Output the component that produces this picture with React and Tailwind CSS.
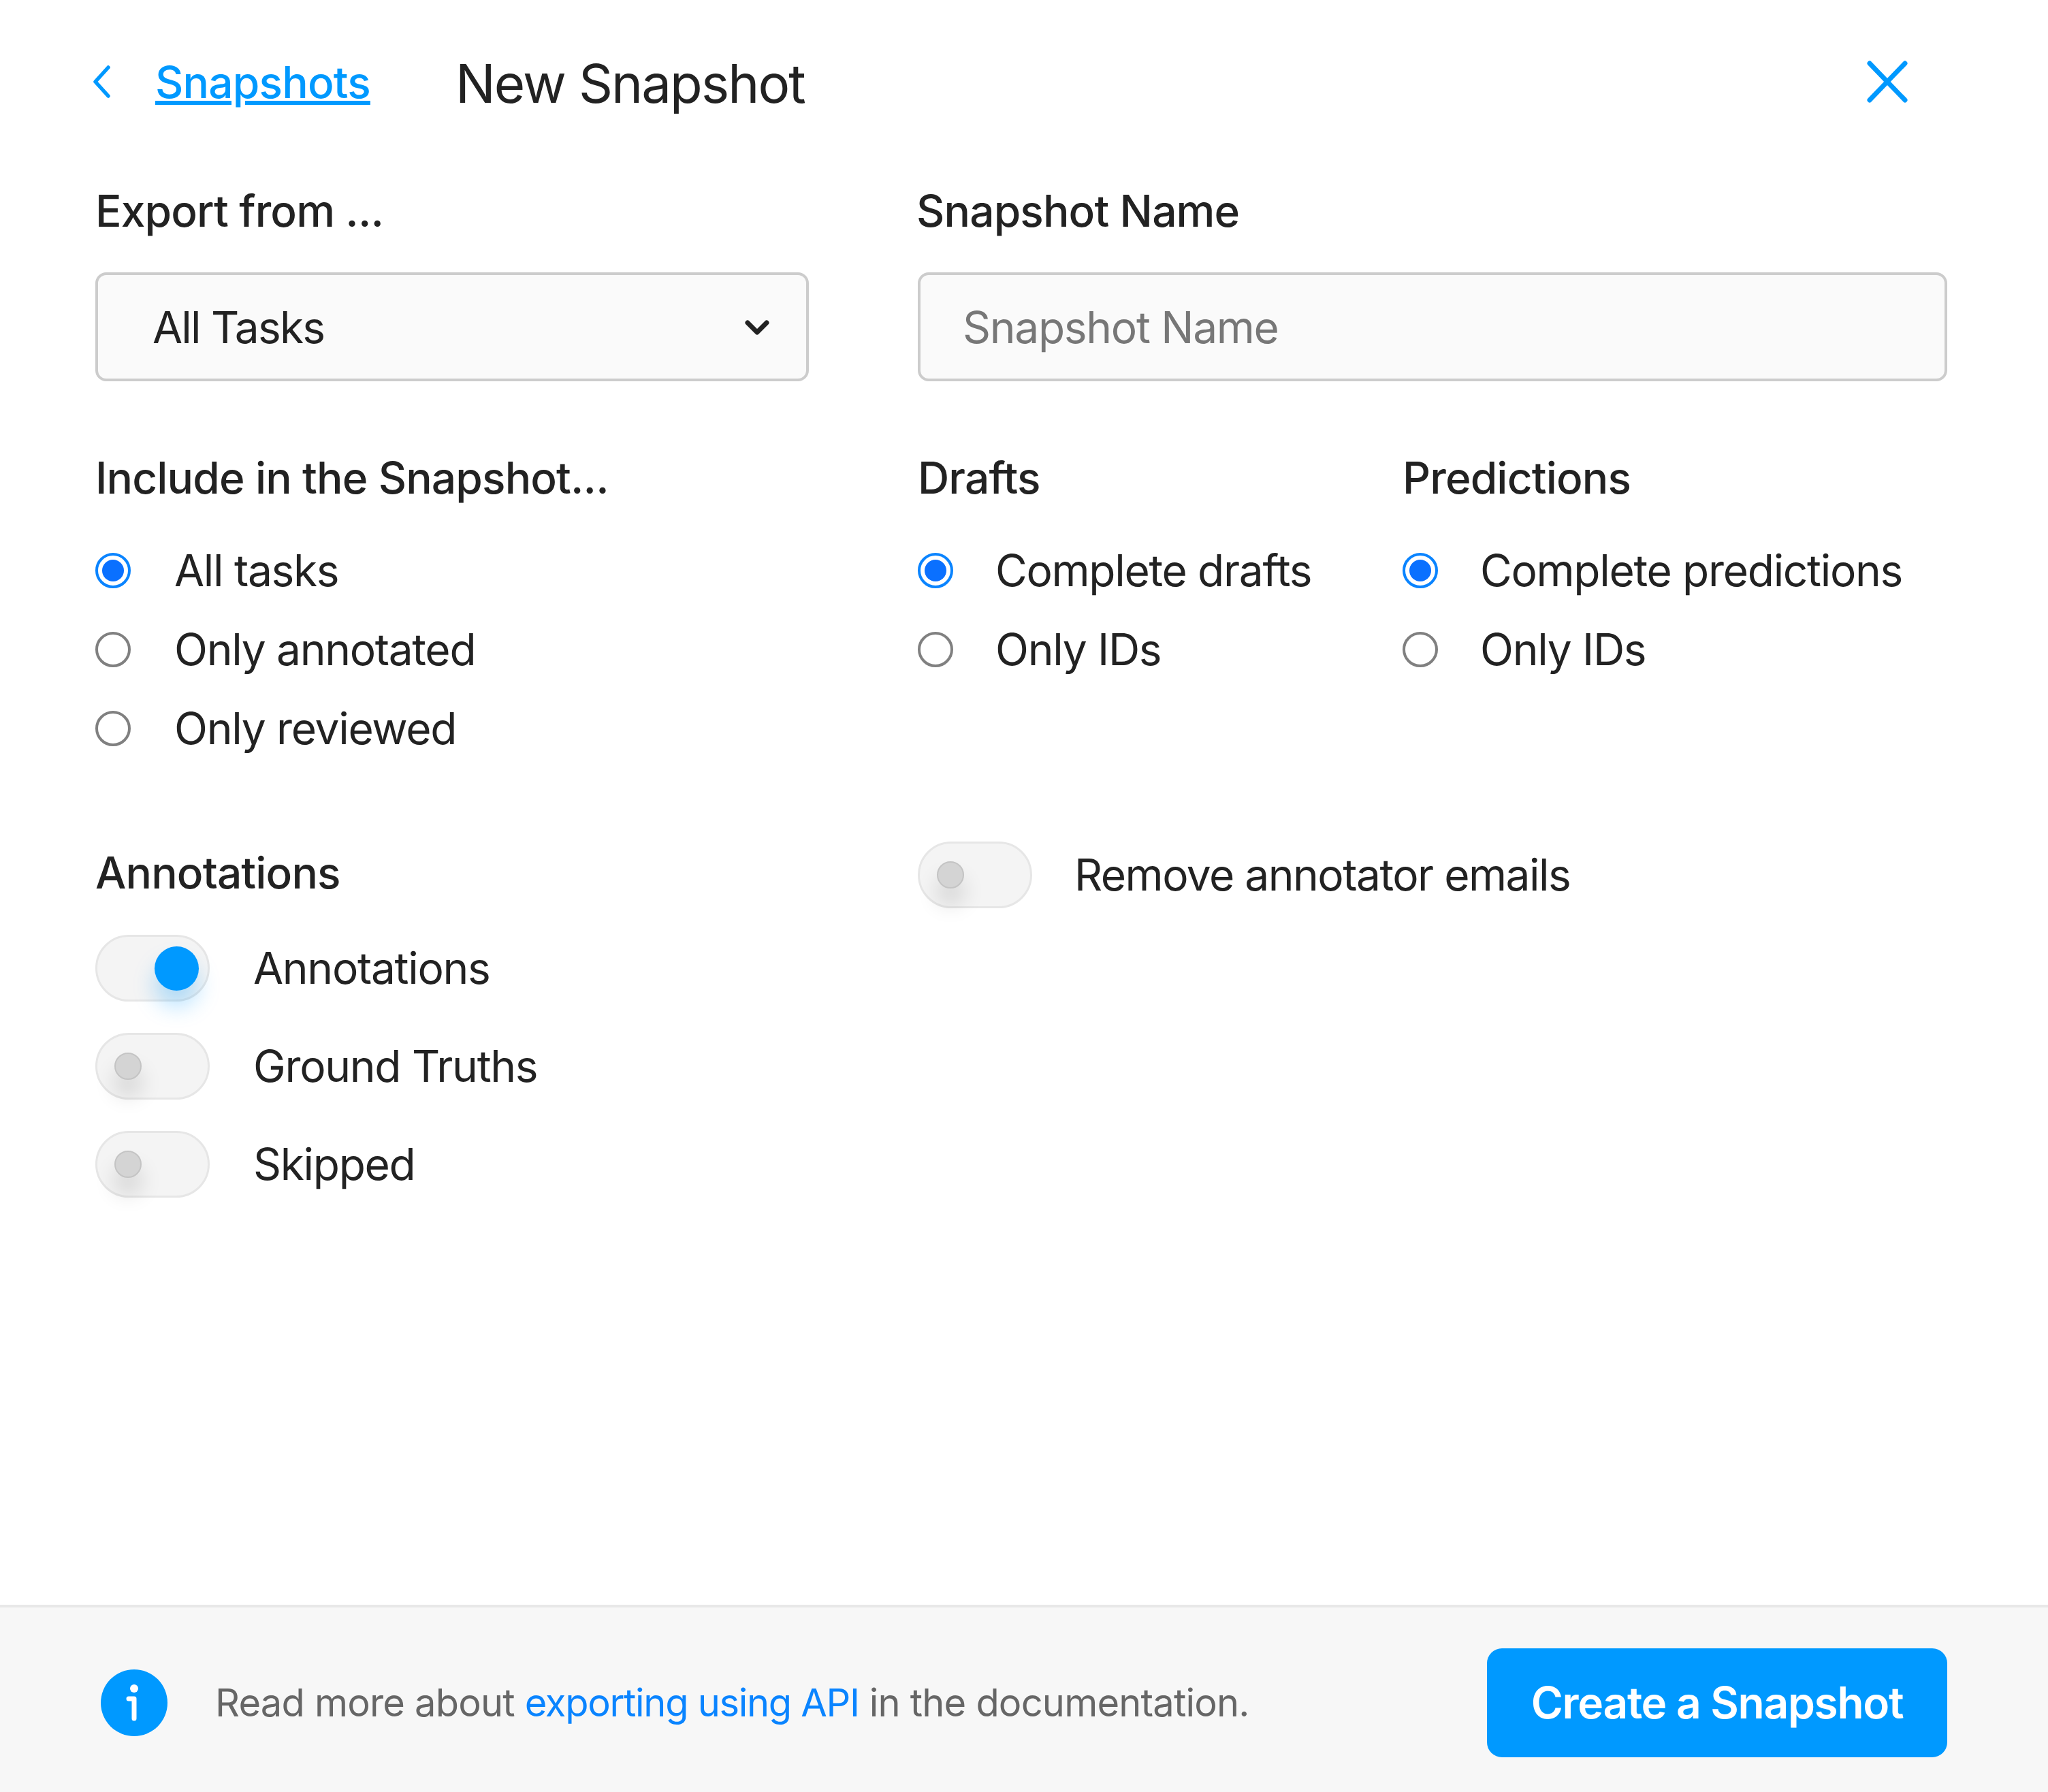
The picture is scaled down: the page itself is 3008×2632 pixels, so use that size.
import React from "react";

const Label = ({ children, className = "" }) => (
  <div className={`text-[64px] leading-[80px] font-medium text-[#222] tracking-[-0.85px] ${className}`}>{children}</div>
);

const Radio = ({ label, checked, textClass = "ml-[64px]" }) => (
  <div className="flex items-center h-[116px]">
    {checked ? (
      <div className="w-[52px] h-[52px] rounded-full border-[4px] border-[#0a84ff] flex items-center justify-center bg-white">
        <div className="w-[32px] h-[32px] rounded-full bg-[#0a70ff]" />
      </div>
    ) : (
      <div className="w-[52px] h-[52px] rounded-full border-[4px] border-[#808080] bg-white" />
    )}
    <span className={`${textClass} text-[64px] leading-[80px] text-[#222] tracking-[-1.3px]`}>{label}</span>
  </div>
);

const Toggle = ({ label, on, textClass = "ml-[64px] tracking-[-1.3px]" }) => (
  <div className="flex items-center h-[144px]">
    <div
      className={`w-[168px] h-[98px] rounded-full border-[3px] border-[#e6e6e6] bg-[#f4f4f4] flex items-center ${
        on ? "justify-end pr-[13px]" : "pl-[25px]"
      }`}
    >
      {on ? (
        <div className="w-[65px] h-[65px] rounded-full bg-[#0099ff] shadow-[0_24px_32px_rgba(0,153,255,0.28)]" />
      ) : (
        <div className="w-[40px] h-[40px] rounded-full bg-[#d4d4d4] border-[2px] border-[#c4c4c4] shadow-[0_24px_32px_rgba(0,0,0,0.14)]" />
      )}
    </div>
    <span className={`${textClass} text-[64px] leading-[80px] text-[#222]`}>{label}</span>
  </div>
);

export default function App() {
  return (
    <div className="w-[3008px] h-[2632px] flex flex-col bg-white font-['Inter',sans-serif]">
      <div className="flex-1 px-[140px]">
        {/* Header */}
        <div className="h-[248px] flex items-center pb-[2px] relative">
          <svg width="30" height="48" viewBox="0 0 30 48" fill="none" className="ml-[-6px] mt-[-6px]">
            <path d="M25 3 L6 24 L25 45" stroke="#0099ff" strokeWidth="5.5" strokeLinecap="round" strokeLinejoin="round" />
          </svg>
          <a className="ml-[64px] mt-[-4px] text-[64px] leading-[80px] font-medium text-[#0099ff] underline tracking-[-0.8px]">Snapshots</a>
          <h1 className="ml-[125px] text-[78px] leading-[96px] text-[#222] tracking-[-1.9px]">New Snapshot</h1>
          <svg width="60" height="62" viewBox="0 0 60 62" fill="none" className="ml-auto mr-[66px] mt-[-6px]">
            <path d="M4 4 L56 58 M56 4 L4 58" stroke="#0099ff" strokeWidth="7" strokeLinecap="round" />
          </svg>
        </div>

        {/* Top fields */}
        <div className="grid grid-cols-[1048px_1512px] gap-x-[160px]">
          <div>
            <Label className="mt-[22px]">Export from ...</Label>
            <div className="mt-[50px] h-[160px] rounded-[16px] border-[4px] border-[#ccc] bg-[#fafafa] flex items-center justify-between pl-[80px] pr-[54px]">
              <span className="pt-[2px] text-[64px] leading-[80px] text-[#222] tracking-[-1.8px]">All Tasks</span>
              <svg width="36" height="24" viewBox="0 0 36 24" fill="none" className="mt-[2px]">
                <path d="M4 5 L18 19 L32 5" stroke="#222" strokeWidth="7" strokeLinecap="round" strokeLinejoin="round" />
              </svg>
            </div>
          </div>
          <div>
            <Label className="mt-[22px] ml-[-2px]">Snapshot Name</Label>
            <div className="mt-[50px] h-[160px] rounded-[16px] border-[4px] border-[#ccc] bg-[#fafafa] flex items-center pl-[62px]">
              <span className="pt-[2px] text-[64px] leading-[80px] text-[#777] tracking-[-1.3px]">Snapshot Name</span>
            </div>
          </div>
        </div>

        {/* Options */}
        <div className="grid grid-cols-[1048px_1512px] gap-x-[160px] mt-[102px]">
          <div>
            <Label>Include in the Snapshot...</Label>
            <div className="mt-[38px]">
              <Radio label="All tasks" checked />
              <Radio label="Only annotated" />
              <Radio label="Only reviewed" />
            </div>
          </div>
          <div className="grid grid-cols-[712px_1fr]">
            <div>
              <Label>Drafts</Label>
              <div className="mt-[38px]">
                <Radio label="Complete drafts" checked textClass="ml-[62px]" />
                <Radio label="Only IDs" textClass="ml-[62px]" />
              </div>
            </div>
            <div>
              <Label>Predictions</Label>
              <div className="mt-[38px]">
                <Radio label="Complete predictions" checked textClass="ml-[62px]" />
                <Radio label="Only IDs" textClass="ml-[62px]" />
              </div>
            </div>
          </div>
        </div>

        {/* Annotations */}
        <div className="grid grid-cols-[1048px_1512px] gap-x-[160px] mt-[114px]">
          <div>
            <Label>Annotations</Label>
            <div className="mt-[28px]">
              <Toggle label="Annotations" on />
              <Toggle label="Ground Truths" />
              <Toggle label="Skipped" />
            </div>
          </div>
          <div className="mt-[-29px]">
            <Toggle label="Remove annotator emails" textClass="ml-[62px] tracking-[-1.5px]" />
          </div>
        </div>
      </div>

      {/* Footer */}
      <div className="h-[275px] border-t-[4px] border-[#e8e8e8] bg-[#f7f7f7] flex items-center justify-between pt-[8px] pl-[148px] pr-[148px]">
        <div className="flex items-center">
          <svg width="98" height="98" viewBox="0 0 98 98" className="shrink-0">
            <circle cx="49" cy="49" r="49" fill="#0099ff" />
            <circle cx="49" cy="28" r="6" fill="#fff" />
            <path d="M41 43 H49 V72" stroke="#fff" strokeWidth="7" fill="none" strokeLinecap="round" strokeLinejoin="round" />
          </svg>
          <p className="ml-[70px] text-[56px] leading-[72px] text-[#666] tracking-[-0.8px]">
            Read more about <a className="text-[#0a84ff] tracking-[-1.3px]">exporting using API</a> in the documentation.
          </p>
        </div>
        <button className="w-[676px] h-[160px] rounded-[22px] bg-[#0099ff] text-white text-[64px] font-semibold tracking-[-1.3px]">
          Create a Snapshot
        </button>
      </div>
    </div>
  );
}
